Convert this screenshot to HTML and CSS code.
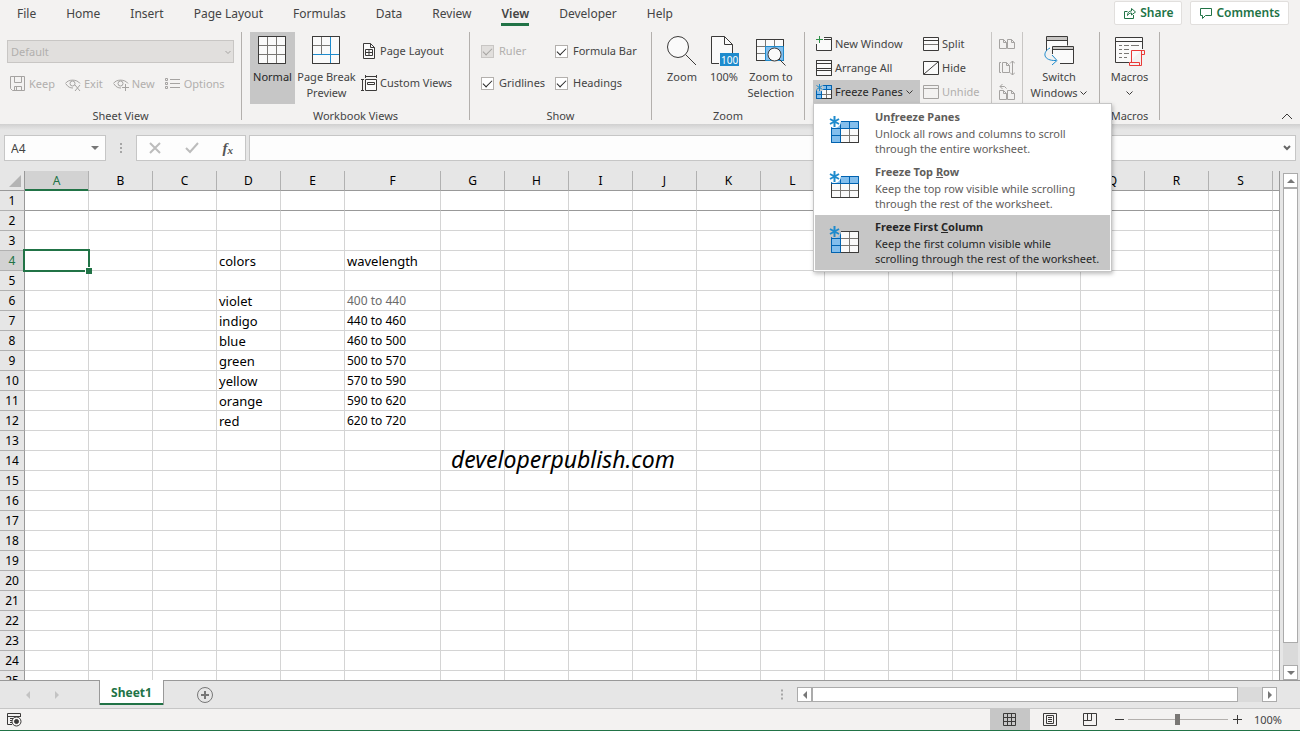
FILE: index.html
```html
<!DOCTYPE html>
<html lang="en">
  <head>
    <meta charset="utf-8" />
    <title>Sheet1</title>
    <link rel="stylesheet" href="styles.css">
  </head>
  <body>
    <header class="tabs">
      <nav>
        <a href="#">File</a>
        <a href="#">Home</a>
        <a href="#">Insert</a>
        <a href="#">Page Layout</a>
        <a href="#">Formulas</a>
        <a href="#">Data</a>
        <a href="#">Review</a>
        <a href="#" class="current">View</a>
        <a href="#">Developer</a>
        <a href="#">Help</a>
      </nav>
      <div class="actions">
        <button>
          <svg width="12" height="12"><path d="M3.500 4.500H.5v7h9V8M3.500 8.500C3.500 5.500 5 4 7.500 4V1.500L11.500 5 7.500 8V6C5.500 6 4.500 7 3.500 8.500z" /></svg>
          Share
        </button>
        <button>
          <svg width="12" height="12"><path d="M.5 1.500h11v7h-6l-3 3v-3h-2z" /></svg>
          Comments
        </button>
      </div>
    </header>

    <div class="ribbon">
      <!-- Sheet View -->
      <section class="group sheet-view">
        <div class="body">
          <div class="picker">
            <select aria-label="Sheet view" disabled><option>Default</option></select>
            <svg width="6" height="5"><path d="M.5 1l2.500 2.500L5.500 1" /></svg>
          </div>
          <div class="view-tools">
            <button class="small" disabled>
              <svg width="16" height="16"><path d="M.5.500h14v14h-12l-2-2zM4.500.500v6h7v-6M4.500 14.500v-4h7v4M6.500 11v3" /></svg>Keep
            </button>
            <button class="small" disabled>
              <svg width="16" height="16"><path d="M.5 7.500C3 3 12 3 15 7.500M1 8c2 3 4 4 7 4M10 9l5 6M15 9l-5 6" /><circle cx="7.500" cy="7.500" r="2.500" /></svg>Exit
            </button>
            <button class="small" disabled>
              <svg width="16" height="16"><path d="M.5 7.500C3 3 12 3 15 7.500M1 8c2 3 4 4 7 4M12.500 8v7M9 11.500h7" /><circle cx="7.500" cy="7.500" r="2.500" /></svg>New
            </button>
            <button class="small" disabled>
              <svg width="16" height="16"><path d="M.5 2.500h2v2h-2zM.5 6.500h2v2h-2zM.5 10.500h2v2h-2zM5 3.500h10M5 7.500h10M5 11.500h10" /></svg>Options
            </button>
          </div>
        </div>
        <h2>Sheet View</h2>
      </section>

      <!-- Workbook Views -->
      <section class="group workbook-views">
        <div class="body">
          <button class="large active">
            <svg width="29" height="30"><path class="paper" d="M.5.500h27v27H.5z" /><path class="mid" d="M9.500 1v26M18.500 1v26M1 9.500h26M1 18.500h26" /><path d="M.5.500h27v27H.5z" /></svg>
            <span>Normal</span>
          </button>
          <button class="large">
            <svg width="29" height="30"><path class="paper" d="M.5.500h27v27H.5z" /><path class="mid" d="M9.500 1v17M1 9.500h17" /><path class="blue" d="M18.500 1v26M1 18.500h26" /><path d="M.5.500h27v27H.5z" /></svg>
            <span>Page Break<br>Preview</span>
          </button>
          <div class="stack">
            <button class="small">
              <svg width="16" height="16"><path class="paper" d="M2.500.500h7l4 4v11h-11z" /><path d="M9.500.500v4h4M4.500 6.500h7v6h-7zM8 6.500v6M4.500 9.500h7" /></svg>Page Layout
            </button>
            <button class="small">
              <svg width="16" height="16"><path class="paper" d="M4.500 4.500h11v11h-11z" /><path d="M4 1.500h12M4.500 0v3M15.500 0v3M1.500 4v12M0 4.500h3M0 15.500h3M6.500 7.500h7v2h-7z" /></svg>Custom Views
            </button>
          </div>
        </div>
        <h2>Workbook Views</h2>
      </section>

      <!-- Show -->
      <section class="group show">
        <div class="body checks">
          <label class="off"><input type="checkbox" checked disabled>Ruler</label>
          <label><input type="checkbox" checked>Formula Bar</label>
          <label><input type="checkbox" checked>Gridlines</label>
          <label><input type="checkbox" checked>Headings</label>
        </div>
        <h2>Show</h2>
      </section>

      <!-- Zoom -->
      <section class="group zoom">
        <div class="body">
          <button class="large">
            <svg width="30" height="30"><circle class="paper" cx="11" cy="11" r="10.500" /><path d="M18.500 18.500L29 29" /></svg>
            <span>Zoom</span>
          </button>
          <button class="large">
            <svg width="30" height="30"><path class="paper" d="M10 27.500H2.500V.500h13l8 8V17" /><path d="M15.500.500v8h8" /><path class="blue-fill" d="M11 17h19v13H11z" /><text x="12" y="28">100</text></svg>
            <span>100%</span>
          </button>
          <button class="large">
            <svg width="30" height="30"><path class="paper" d="M.5 3.500h27v21H.5z" /><path class="sky" d="M10 10h17v14H10z" /><path class="mid" d="M9.500 4v20M18.500 4v6M1 10.500h26M1 17.500h8" /><path d="M.5 3.500h27v21H.5z" /><path class="blue" d="M9.500 24.500v-14h18v14z" /><circle class="paper" cx="18.500" cy="18.500" r="6.500" /><path d="M23 23l6.500 6.500" /></svg>
            <span>Zoom to<br>Selection</span>
          </button>
        </div>
        <h2>Zoom</h2>
      </section>

      <!-- Window -->
      <section class="group window">
        <div class="body">
          <div class="rows">
            <button class="small">
              <svg width="16" height="16"><path class="paper" d="M8 1.500h7.500v13H.5V8" /><path d="M8 3.500h7" /><path class="green" d="M3.500 0v7M0 3.500h7" /></svg>New Window
            </button>
            <button class="small">
              <svg width="16" height="16"><path class="paper" d="M.5.500h15v15H.5z" /><path d="M.5 3.500h15M.5 8.500h15M.5 10.500h15M.5.500h15v15H.5z" /></svg>Arrange All
            </button>
            <div class="dropdown">
              <button class="small active">
                <svg width="16" height="16"><path class="paper" d="M.5 1.500h15v13H.5z" /><path class="sky" d="M1 2h14v4H5v9H1z" /><path class="mid" d="M5.500 6v8M10.500 6v8M5 10.500h10" /><path class="edge" d="M.5 14.500v-13h15v4h-10v9zM10.500 2v4M1 10.500h4" /><path d="M15.500 6v8.500h-10" /><circle class="halo" cx="3.500" cy="3.500" r="4" /><path class="blue" d="M3.500 0v7M.5 1.500l6 4M6.500 1.500l-6 4" /></svg>Freeze Panes
                <svg width="7" height="5"><path d="M.5.500l3 3 3-3" /></svg>
              </button>
              <div class="menu">
                <button>
                  <svg width="32" height="32"><path class="paper" d="M2.500 6.500h27v21h-27z" /><path class="sky" d="M3 7h26v6H12v14H3z" /><path class="mid" d="M20.500 13v14M12 20.500h17" /><path d="M29.500 13v14.500h-18" /><path class="edge" d="M2.500 27.500v-21h27v7h-18v14zM11.500 7v7M20.500 7v6M3 13.500h9M3 20.500h8" /><circle class="halo" cx="5.500" cy="6.500" r="6.500" /><path class="star" d="M5.500 1v11M1 4l9 5M10 4l-9 5" /></svg>
                  <span><b>Un<u>f</u>reeze Panes</b>Unlock all rows and columns to scroll<br>through the entire worksheet.</span>
                </button>
                <button>
                  <svg width="32" height="32"><path class="paper" d="M2.500 6.500h27v21h-27z" /><path class="sky" d="M3 7h26v6H3z" /><path class="mid" d="M11.500 13v14M20.500 13v14M3 20.500h26" /><path d="M2.500 13v14.500h27V13" /><path class="edge" d="M2.500 13.500v-7h27v7zM11.500 7v6M20.500 7v6" /><circle class="halo" cx="5.500" cy="6.500" r="6.500" /><path class="star" d="M5.500 1v11M1 4l9 5M10 4l-9 5" /></svg>
                  <span><b>Freeze Top <u>R</u>ow</b>Keep the top row visible while scrolling<br>through the rest of the worksheet.</span>
                </button>
                <button class="active">
                  <svg width="32" height="32"><path class="paper" d="M2.500 6.500h27v21h-27z" /><path class="sky" d="M3 7h8v20H3z" /><path class="mid" d="M20.500 7v20M12 13.500h17M12 20.500h17" /><path d="M11.500 6.500h18v21h-18" /><path class="edge" d="M2.500 6.500h9v21h-9zM3 13.500h8M3 20.500h8" /><circle class="halo" cx="5.500" cy="6.500" r="6.500" /><path class="star" d="M5.500 1v11M1 4l9 5M10 4l-9 5" /></svg>
                  <span><b>Freeze First <u>C</u>olumn</b>Keep the first column visible while<br>scrolling through the rest of the worksheet.</span>
                </button>
              </div>
            </div>
          </div>
          <div class="rows">
            <button class="small">
              <svg width="16" height="16"><path class="paper" d="M.5 1.500h15v13H.5z" /><path class="mid" d="M1 8.500h14" /><path d="M.5 4.500h15" /></svg>Split
            </button>
            <button class="small">
              <svg width="16" height="16"><path class="paper" d="M.5 1.500h15v13H.5z" /><path d="M1 14L15 2" /></svg>Hide
            </button>
            <button class="small" disabled>
              <svg width="16" height="16"><path d="M.5 1.500h15v13H.5zM.5 4.500h15" /></svg>Unhide
            </button>
          </div>
          <div class="rows side">
            <button class="small" disabled aria-label="View Side by Side">
              <svg width="16" height="16"><path d="M.5 3.500h4l3 3v6h-7zM4.500 3.500v3h3M8.500 3.500h4l3 3v6h-7zM12.500 3.500v3h3" /></svg>
            </button>
            <button class="small" disabled aria-label="Synchronous Scrolling">
              <svg width="16" height="16"><path d="M2 2.500H.5v10H2M3.500 2.500h4l3 3v7h-7zM7.500 2.500v3h3M13.500 1v14M11 3.500L13.500 1 16 3.500M11 12.500l2.500 2.500 2.500-2.500" /></svg>
            </button>
            <button class="small" disabled aria-label="Reset Window Position">
              <svg width="16" height="16"><path d="M.5 6.500h4l3 3v6h-7zM4.500 6.500v3h3M8.500 6.500h4l3 3v6h-7zM12.500 6.500v3h3M3.500 0L1 2.500 3.500 5M1 2.500h4.500l2 2" /></svg>
            </button>
          </div>
          <button class="large">
            <svg width="30" height="30"><path class="paper" d="M2.500 15V.500h21v9" /><path class="band" d="M3 1h20v3H3z" /><path d="M2.500 4.500h21" /><path class="paper" d="M8.500 18v-7.500h21v17H16" /><path class="band" d="M9 11h20v2H9z" /><path d="M8.500 13.500h21" /><path class="blue" d="M6 12C-2 16-1 25 12 24.500M8 19l5 5.500L8 29" /></svg>
            <span>Switch<br>Windows <svg class="chev" width="7" height="5"><path d="M.5.500l3 3 3-3" /></svg></span>
          </button>
        </div>
        <h2>Window</h2>
      </section>

      <!-- Macros -->
      <section class="group macros">
        <div class="body">
          <button class="large">
            <svg width="30" height="30"><path class="paper" d="M14 26.500H.5v-25h27V13" /><path d="M.5 5.500h27" /><path class="mid" d="M4 9.500h3M9 9.500h5M16 9.500h8M4 13.500h3M9 13.500h5M4 17.500h3M9 17.500h5M4 21.500h3M9 21.500h3" /><path class="red" d="M16.500 26.500v-12h13v4h-3v11h-12v-3h10v3M26.500 14.500v5" /></svg>
            <span>Macros<br><svg class="chev" width="7" height="5"><path d="M.5.500l3 3 3-3" /></svg></span>
          </button>
        </div>
        <h2>Macros</h2>
      </section>

      <button class="collapse" aria-label="Collapse the ribbon">
        <svg width="12" height="7"><path d="M1 6l5-5 5 5" /></svg>
      </button>
    </div>

    <div class="formula-bar">
      <div class="name-box">
        <input type="text" value="A4" aria-label="Name box">
        <svg width="8" height="4"><path class="solid" d="M0 0h8L4 4z" /></svg>
      </div>
      <i class="dots"></i>
      <div class="entry">
        <button aria-label="Cancel"><svg width="12" height="12"><path class="pale" d="M1 1l10 10M11 1L1 11" /></svg></button>
        <button aria-label="Enter"><svg width="14" height="12"><path class="pale" d="M1 6l4 4L13 1" /></svg></button>
        <button class="fx" aria-label="Insert function">f<sub>x</sub></button>
      </div>
      <div class="formula">
        <input type="text" aria-label="Formula">
        <svg width="8" height="6"><path class="thick" d="M1 1l3 3 3-3" /></svg>
      </div>
    </div>

    <main class="sheet">
      <div class="cells">
        <table id="grid"></table>
        <p class="credit">developerpublish.com</p>
      </div>
      <div class="vscroll">
        <button aria-label="Scroll up"><svg width="8" height="4"><path class="solid" d="M0 4h8L4 0z" /></svg></button>
        <div class="track"><div class="thumb"></div></div>
        <button aria-label="Scroll down"><svg width="8" height="4"><path class="solid" d="M0 0h8L4 4z" /></svg></button>
      </div>
    </main>

    <div class="sheet-tabs">
      <div class="steps">
        <button aria-label="Previous sheet"><svg width="4" height="8"><path class="faint" d="M4 0v8L0 4z" /></svg></button>
        <button aria-label="Next sheet"><svg width="4" height="8"><path class="faint" d="M0 0v8l4-4z" /></svg></button>
      </div>
      <button class="sheet-tab">Sheet1</button>
      <button class="add" aria-label="New sheet"><svg width="16" height="16"><circle cx="8" cy="8" r="7.500" /><path class="plus" d="M8 4v8M4 8h8" /></svg></button>
      <i class="dots"></i>
      <div class="hscroll">
        <button aria-label="Scroll left"><svg width="4" height="8"><path class="solid" d="M4 0v8L0 4z" /></svg></button>
        <div class="track"><div class="thumb"></div></div>
        <button aria-label="Scroll right"><svg width="4" height="8"><path class="solid" d="M0 0v8l4-4z" /></svg></button>
      </div>
    </div>

    <footer class="status">
      <button class="record" aria-label="Record macro"><svg width="15" height="14"><path d="M5 11.500H.5v-11h13V4M.5 3.500h13M3 5.500h3M3 7.500h2M3 9.500h2" /><circle cx="9.500" cy="8.500" r="4.500" /><circle class="dot" cx="9.500" cy="8.500" r="2" /></svg></button>
      <div class="views">
        <button class="active" aria-label="Normal view"><svg width="14" height="14"><path d="M.5.500h12v12H.5zM4.500.500v12M8.500.500v12M.5 4.500h12M.5 8.500h12" /></svg></button>
        <button aria-label="Page layout view"><svg width="14" height="14"><path d="M.5.500h13v12H.5zM3.500 2.500h7v8h-7zM5 4.500h4M5 6.500h4M5 8.500h4" /></svg></button>
        <button aria-label="Page break view"><svg width="14" height="14"><path d="M.5.500h13v12H.5zM4.500.500v7M.5 7.500h8v-7" /></svg></button>
      </div>
      <button class="step" aria-label="Zoom out"><svg width="9" height="9"><path d="M0 4.500h9" /></svg></button>
      <input type="range" min="0" max="100" value="50" aria-label="Zoom">
      <button class="step" aria-label="Zoom in"><svg width="9" height="9"><path d="M0 4.500h9M4.500 0v9" /></svg></button>
      <span class="percent">100%</span>
    </footer>
    <script src="sheet.js"></script>
  </body>
</html>
```
FILE: styles.css
```css
* {
  box-sizing: border-box;
}
body {
  margin: 0;
  height: 100vh;
  display: flex;
  flex-direction: column;
  overflow: hidden;
  background: #e6e6e6;
  color: #444;
  font: 11px/16px "Noto Sans", "Open Sans", sans-serif;
}
button,
input,
select {
  font: inherit;
  color: inherit;
  margin: 0;
  padding: 0;
  border: 0;
  background: none;
}
button {
  white-space: nowrap;
}
h2,
p {
  margin: 0;
}

/* icons */
svg {
  flex: none;
  fill: none;
  stroke: #3b3a39;
}
.paper { fill: #fafafa; }
.mid { stroke: #797774; }
.blue { stroke: #1e8bcd; }
.edge { stroke: #0063b1; }
.green { stroke: #309048; }
.red { stroke: #e93a37; }
.blue-fill { fill: #1e8bcd; stroke: none; }
.sky { fill: #83beec; stroke: none; }
.band { fill: #c8c6c4; stroke: none; }
.halo { fill: #fff; stroke: none; }
.active .halo { fill: #c6c6c6; }
.star { stroke: #1e8bcd; stroke-width: 2; }
.solid { fill: #777; stroke: none; }
.faint { fill: #c3c3c3; stroke: none; }
.pale { stroke: #bcbcbc; stroke-width: 2; }
.thick { stroke: #666; stroke-width: 2; }
svg text {
  fill: #fff;
  stroke: none;
  font-size: 10px;
}

/* tab strip */
.tabs {
  flex: none;
  height: 28px;
  display: flex;
  justify-content: space-between;
  background: #f3f2f1;
  font-size: 12px;
}
.tabs nav {
  display: flex;
  gap: 30px;
  padding: 5px 0 2px 17px;
}
.tabs a {
  color: #444;
  text-decoration: none;
  line-height: 18px;
  white-space: nowrap;
}
.tabs .current {
  font-weight: 600;
  border-bottom: 3px solid #217346;
}
.actions {
  display: flex;
  gap: 8px;
  padding: 1px 11px 3px 0;
}
.actions button {
  display: flex;
  align-items: center;
  gap: 4px;
  padding: 0 8px;
  border: 1px solid #e1dfdd;
  border-radius: 2px;
  background: #fff;
  color: #217346;
  font-weight: 600;
}
.actions svg {
  margin-left: 1px;
  stroke: #217346;
}

/* ribbon */
.ribbon {
  flex: none;
  height: 96px;
  display: flex;
  padding: 4px 0;
  background: #f3f2f1;
}
.group {
  flex: none;
  border-right: 1px solid #b3b0ad;
}
.group .body {
  height: 80px;
  display: flex;
  align-items: flex-start;
}
.group h2 {
  font-size: 11px;
  font-weight: normal;
  line-height: 8px;
  text-align: center;
}
.large {
  display: flex;
  flex-direction: column;
  align-items: center;
  gap: 3px;
  height: 72px;
  padding-top: 4px;
  text-align: center;
}
.chev {
  vertical-align: 1px;
}
.small {
  display: flex;
  align-items: center;
  gap: 3px;
  height: 24px;
}
.active {
  background: #c6c6c6;
  color: #262626;
}
button:disabled,
.off {
  color: #b1afad;
}
button:disabled svg {
  stroke: #a5a3a1;
}

.sheet-view {
  width: 242px;
}
.sheet-view .body {
  flex-direction: column;
  padding: 8px 7px 0;
}
.picker {
  position: relative;
  width: 100%;
}
.picker select {
  appearance: none;
  display: block;
  width: 100%;
  height: 23px;
  padding: 0 3px;
  border: 1px solid #c8c6c4;
  background: #e1dfdd;
  color: #b1afad;
  opacity: 1;
}
.picker svg {
  position: absolute;
  right: 3px;
  top: 10px;
  stroke: #a5a3a1;
}
.view-tools {
  display: flex;
  gap: 10px;
  padding: 9px 0 0 3px;
}

.workbook-views {
  width: 228px;
}
.workbook-views .body {
  padding-left: 8px;
}
.workbook-views .large {
  width: 45px;
}
.workbook-views .large + .large {
  width: 63px;
}
.stack {
  padding: 3px 0 0 3px;
}
.stack .small {
  height: 32px;
}

.show {
  width: 182px;
}
.show .checks {
  display: grid;
  grid-template-columns: 74px 1fr;
  grid-auto-rows: 32px;
  padding: 3px 0 0 11px;
}
.checks label {
  display: flex;
  align-items: center;
  gap: 5px;
  height: 32px;
}
.checks input {
  appearance: none;
  display: grid;
  place-content: center;
  width: 13px;
  height: 13px;
  border: 1px solid #b3b0ad;
  background: #fff;
}
.checks input::after {
  content: "";
  width: 8px;
  height: 4px;
  border: solid #262626;
  border-width: 0 0 1px 1px;
  transform: translateY(-1px) rotate(-45deg);
}
.checks input:disabled {
  background: #e1dfdd;
  border-color: #c8c6c4;
}
.checks input:disabled::after {
  border-color: #a5a3a1;
}

.zoom {
  width: 153px;
}
.zoom .body {
  padding-left: 9px;
}
.zoom .large {
  width: 42px;
}
.zoom .large:last-child {
  width: 52px;
}

.window {
  width: 295px;
}
.window .body {
  padding-left: 8px;
}
.rows {
  width: 107px;
}
.rows .small {
  width: 100%;
  padding-left: 3px;
}
.rows + .rows {
  width: 71px;
}
.rows.side {
  width: 32px;
  border: solid #c8c6c4;
  border-width: 0 1px;
}
.rows.side .small {
  padding-left: 7px;
}
.window .large {
  width: 72px;
}
.dropdown {
  position: relative;
}
.menu {
  position: absolute;
  z-index: 2;
  left: 0;
  top: 23px;
  padding: 1px;
  border: 1px solid #c6c6c6;
  background: #fff;
  box-shadow: 1px 2px 4px rgba(0, 0, 0, 0.25);
}
.menu button {
  display: flex;
  gap: 14px;
  width: 295px;
  height: 55px;
  padding: 3px 0 0 14px;
  color: #5f5d5b;
  line-height: 15px;
  text-align: left;
}
.menu .active {
  color: #262626;
}
.menu svg {
  margin-top: 7px;
}
.menu b {
  display: block;
  line-height: 18px;
}

.macros {
  width: 60px;
}
.macros .body {
  justify-content: center;
}
.collapse {
  align-self: flex-end;
  margin: 0 7px 0 auto;
}
.collapse svg,
.name-box svg,
.formula svg {
  display: block;
}

/* formula bar */
.formula-bar {
  flex: none;
  height: 47px;
  display: flex;
  padding: 11px 4px 10px;
  background: linear-gradient(#d0d0d0, #e6e6e6 6px);
  font-size: 12px;
}
.name-box,
.entry,
.formula {
  display: flex;
  align-items: center;
  border: 1px solid #c6c6c6;
  background: #fdfdfd;
}
.name-box {
  width: 102px;
  padding: 0 6px;
}
.name-box input,
.formula input {
  flex: 1;
  min-width: 0;
  height: 100%;
}
.dots {
  width: 30px;
  background: radial-gradient(circle, #a6a6a6 1px, transparent 1px) center / 4px 4px repeat-y;
  background-clip: content-box;
  padding: 7px 0;
}
.entry {
  width: 110px;
  justify-content: space-around;
  margin-right: 3px;
}
.entry button {
  display: flex;
}
.entry .fx {
  display: block;
  color: #555;
  font: italic bold 15px/20px "Liberation Serif", serif;
}
.fx sub {
  font-size: 11px;
  line-height: 1px;
  vertical-align: -1px;
}
.formula {
  flex: 1;
  padding: 0 4px;
}

/* worksheet */
.sheet {
  flex: 1;
  min-height: 0;
  display: flex;
}
.cells {
  position: relative;
  flex: 1;
  min-width: 0;
  overflow: hidden;
  border-right: 1px solid #999;
}
#grid {
  table-layout: fixed;
  width: max-content;
  border-spacing: 0;
  background: #fff;
  color: #000;
  font-size: 13px;
  line-height: 18px;
}
#grid col { width: 64px; }
#grid .heads { width: 25px; }
#grid .wide { width: 96px; }
#grid td,
#grid th {
  height: 20px;
  padding: 1px 2px 0;
  border: solid #d4d4d4;
  border-width: 0 1px 1px 0;
  white-space: nowrap;
}
#grid th {
  padding: 1px 0 0;
  border-color: #b1b1b1;
  background: #e6e6e6;
  font-size: 12px;
  font-weight: normal;
}
#grid thead th,
#grid .frozen td {
  border-bottom-color: #999;
}
#grid tbody th,
#grid .corner {
  border-right-color: #999;
}
#grid .picked {
  background: #d2d2d2;
  color: #217346;
}
#grid thead .picked {
  box-shadow: inset 0 -1px #217346;
  border-bottom-color: #217346;
}
#grid .corner svg {
  display: block;
  margin-left: 9px;
}
.corner path {
  fill: #b4b4b4;
  stroke: none;
}
#grid .range {
  font-size: 12px;
}
#grid .muted {
  color: #6b6b6b;
}
.cursor {
  position: relative;
}
.cursor::before {
  content: "";
  position: absolute;
  inset: -2px;
  border: 2px solid #217346;
}
.cursor::after {
  content: "";
  position: absolute;
  right: -4px;
  bottom: -4px;
  width: 6px;
  height: 6px;
  border: solid #fff;
  border-width: 1px 0 0 1px;
  background: #217346;
}
/* text box lying over the cells */
.credit {
  position: absolute;
  left: 451px;
  top: 273px;
  color: #000;
  font-size: 23px;
  font-style: italic;
  line-height: 30px;
}

/* scroll bars */
.vscroll {
  width: 20px;
  display: flex;
  flex-direction: column;
  padding: 2px 2px 0 3px;
}
.vscroll button,
.hscroll button {
  display: grid;
  place-content: center;
  width: 15px;
  height: 15px;
  border: 1px solid #ababab;
  background: #fff;
}
.track {
  flex: 1;
  background: #dadada;
}
.thumb {
  border: 1px solid #ababab;
  background: #fff;
}
.vscroll .thumb {
  height: calc(100% - 22px);
}
.hscroll {
  flex: 0 1 480px;
  display: flex;
}
.hscroll .thumb {
  width: calc(100% - 24px);
  height: 15px;
}

/* sheet tabs */
.sheet-tabs {
  flex: none;
  height: 28px;
  display: flex;
  align-items: center;
  padding-right: 23px;
  border-top: 1px solid #999;
}
.steps {
  width: 99px;
  display: flex;
  gap: 25px;
  padding-left: 26px;
}
.steps button,
.add {
  display: flex;
}
.sheet-tab {
  align-self: flex-start;
  width: 65px;
  height: 25px;
  margin-top: -1px;
  border: solid #999;
  border-width: 0 1px;
  box-shadow: inset 0 -2px #217346;
  background: #fff;
  color: #217346;
  font-size: 12px;
  font-weight: bold;
}
.add {
  margin: 0 auto 0 33px;
}
.add svg {
  stroke: #777;
}
.plus {
  stroke-width: 2;
}
.sheet-tabs .dots {
  align-self: stretch;
}

/* status bar */
.status {
  flex: none;
  height: 23px;
  display: flex;
  align-items: center;
  padding: 0 18px 0 7px;
  border-top: 1px solid #c6c6c6;
  border-bottom: 1px solid #217346;
  background: #f3f2f1;
}
.status svg {
  display: block;
}
.dot {
  fill: #3b3a39;
}
.views {
  display: flex;
  height: 100%;
  margin: 0 5px 0 auto;
}
.views button {
  width: 40px;
  padding-left: 13px;
}
.status input {
  appearance: none;
  width: 100px;
  height: 11px;
  margin: 0 5px 0 4px;
  background: linear-gradient(#b3b0ad, #b3b0ad) center / 100% 1px no-repeat;
}
.status input::-webkit-slider-thumb {
  appearance: none;
  width: 5px;
  height: 11px;
  background: #797774;
}
.percent {
  margin-left: 12px;
}
```
FILE: sheet.js
```js
const grid = document.getElementById("grid");
const area = grid.parentElement;
// just enough columns and rows to fill the window
const columns = "ABCDEFGHIJKLMNOPQRSTUVWXYZ"
  .split("")
  .slice(0, Math.ceil((area.clientWidth - 57) / 64));
const rowCount = Math.ceil(area.clientHeight / 20) - 1;
const selected = { col: "A", row: 4 };

const values = {
  D4: "colors", F4: "wavelength",
  D6: "violet", F6: "400 to 440",
  D7: "indigo", F7: "440 to 460",
  D8: "blue", F8: "460 to 500",
  D9: "green", F9: "500 to 570",
  D10: "yellow", F10: "570 to 590",
  D11: "orange", F11: "590 to 620",
  D12: "red", F12: "620 to 720",
};

let html = '<colgroup><col class="heads">';
for (const c of columns) {
  html += c == "F" ? '<col class="wide">' : "<col>";
}
html += '</colgroup><thead><tr><th class="corner"><svg width="12" height="12"><path d="M12 0v12H0z" /></svg></th>';
for (const c of columns) {
  html += `<th class="${c == selected.col ? "picked" : ""}">${c}</th>`;
}
html += "</tr></thead><tbody>";
for (let r = 1; r <= rowCount; r++) {
  html += `<tr class="${r == 1 ? "frozen" : ""}"><th class="${r == selected.row ? "picked" : ""}">${r}</th>`;
  for (const c of columns) {
    const names = [];
    if (c == selected.col && r == selected.row) names.push("cursor");
    if (c == "F" && r > 4) names.push("range");
    if (c == "F" && r == 6) names.push("muted");
    html += `<td class="${names.join(" ")}">${values[c + r] || ""}</td>`;
  }
  html += "</tr>";
}
grid.innerHTML = html + "</tbody>";
```
